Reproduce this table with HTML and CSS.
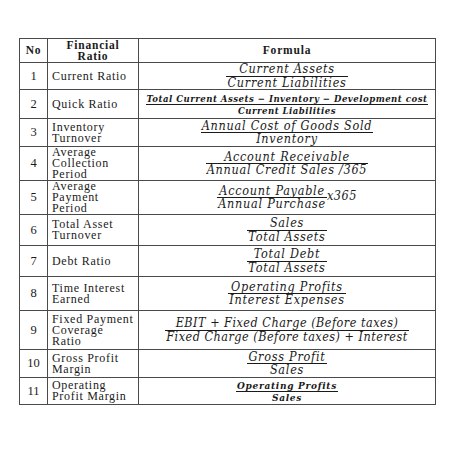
FILE: index.html
```html
<!DOCTYPE html>
<html>
<head>
<meta charset="utf-8">
<link rel="stylesheet" href="styles.css">
</head>
<body>
<div class="page">
<table class="ratios">
  <colgroup><col class="c-no"><col class="c-name"><col class="c-formula"></colgroup>
  <thead>
    <tr class="h-head"><th>No</th><th>Financial<br>Ratio</th><th>Formula</th></tr>
  </thead>
  <tbody>
    <tr class="h1"><td class="no">1</td><td class="name">Current Ratio</td>
      <td class="f"><span class="frac"><span class="num">Current Assets</span><span class="den">Current Liabilities</span></span></td></tr>
    <tr class="h2"><td class="no">2</td><td class="name">Quick Ratio</td>
      <td class="f"><span class="frac small bold"><span class="num">Total Current Assets − Inventory − Development cost</span><span class="den">Current Liabilities</span></span></td></tr>
    <tr class="h3"><td class="no">3</td><td class="name">Inventory<br>Turnover</td>
      <td class="f"><span class="frac"><span class="num">Annual Cost of Goods Sold</span><span class="den">Inventory</span></span></td></tr>
    <tr class="h4"><td class="no">4</td><td class="name">Average<br>Collection<br>Period</td>
      <td class="f"><span class="frac"><span class="num">Account Receivable</span><span class="den">Annual Credit Sales /365</span></span></td></tr>
    <tr class="h5"><td class="no">5</td><td class="name">Average<br>Payment<br>Period</td>
      <td class="f"><span class="frac"><span class="num">Account Payable</span><span class="den">Annual Purchase</span></span><span class="mul">x365</span></td></tr>
    <tr class="h6"><td class="no">6</td><td class="name">Total Asset<br>Turnover</td>
      <td class="f"><span class="frac"><span class="num">Sales</span><span class="den">Total Assets</span></span></td></tr>
    <tr class="h7"><td class="no">7</td><td class="name">Debt Ratio</td>
      <td class="f"><span class="frac"><span class="num">Total Debt</span><span class="den">Total Assets</span></span></td></tr>
    <tr class="h8"><td class="no">8</td><td class="name">Time Interest<br>Earned</td>
      <td class="f"><span class="frac"><span class="num">Operating Profits</span><span class="den">Interest Expenses</span></span></td></tr>
    <tr class="h9"><td class="no">9</td><td class="name">Fixed Payment<br>Coverage<br>Ratio</td>
      <td class="f"><span class="frac wide"><span class="num">EBIT + Fixed Charge (Before taxes)</span><span class="den">Fixed Charge (Before taxes) + Interest</span></span></td></tr>
    <tr class="h10"><td class="no">10</td><td class="name">Gross Profit<br>Margin</td>
      <td class="f"><span class="frac"><span class="num">Gross Profit</span><span class="den">Sales</span></span></td></tr>
    <tr class="h11"><td class="no">11</td><td class="name">Operating<br>Profit Margin</td>
      <td class="f"><span class="frac tiny bold"><span class="num">Operating Profits</span><span class="den">Sales</span></span></td></tr>
  </tbody>
</table>
</div>
</body>
</html>
```

FILE: styles.css
```css
html, body {
  margin: 0;
  padding: 0;
  background: #ffffff;
}
.page {
  padding: 38px 0 0 19px;
}
.ratios {
  border-collapse: collapse;
  table-layout: fixed;
  width: 416px;
  font-family: "Liberation Serif", "Times New Roman", serif;
  color: #1a1a1a;
}
.c-no { width: 28px; }
.c-name { width: 91px; }
.c-formula { width: 297px; }
.ratios th, .ratios td {
  border: 1px solid #4a4a4a;
  padding: 0;
  vertical-align: middle;
}
.ratios th {
  font-weight: bold;
  font-size: 11.5px;
  line-height: 10.5px;
  text-align: center;
  letter-spacing: 0.8px;
}
.ratios td.no {
  text-align: center;
  font-size: 12.5px;
}
.ratios td.name {
  font-size: 12px;
  line-height: 11px;
  padding-left: 4px;
  letter-spacing: 0.7px;
}
.ratios td.f {
  text-align: center;
  white-space: nowrap;
}
.frac {
  display: inline-flex;
  flex-direction: column;
  align-items: center;
  vertical-align: middle;
  font-family: "DejaVu Serif Condensed", "DejaVu Serif", serif;
  font-style: italic;
  font-size: 12.5px;
  line-height: 12.5px;
  letter-spacing: 0.75px;
}
.frac .num {
  padding: 0 1px;
}
.frac .den {
  border-top: 1.3px solid #1a1a1a;
  align-self: stretch;
  text-align: center;
  padding: 0 1px;
}
.frac.wide {
  letter-spacing: 0.5px;
}
.frac.small {
  font-size: 9.5px;
  line-height: 11px;
  letter-spacing: 0.5px;
}
.frac.tiny {
  font-size: 10px;
  line-height: 11px;
  letter-spacing: 0.7px;
}
.frac.bold {
  font-weight: bold;
}
.mul {
  font-family: "DejaVu Serif Condensed", "DejaVu Serif", serif;
  font-style: italic;
  font-size: 12.5px;
  letter-spacing: 0.5px;
  vertical-align: middle;
  position: relative;
  top: -2px;
}
.h-head { height: 24px; }
.h1 { height: 27px; }
.h2 { height: 29px; }
.h3 { height: 28px; }
.h4 { height: 34px; }
.h5 { height: 33px; }
.h6 { height: 31px; }
.h7 { height: 31px; }
.h8 { height: 34px; }
.h9 { height: 39px; }
.h10 { height: 28px; }
.h11 { height: 27px; }
```
